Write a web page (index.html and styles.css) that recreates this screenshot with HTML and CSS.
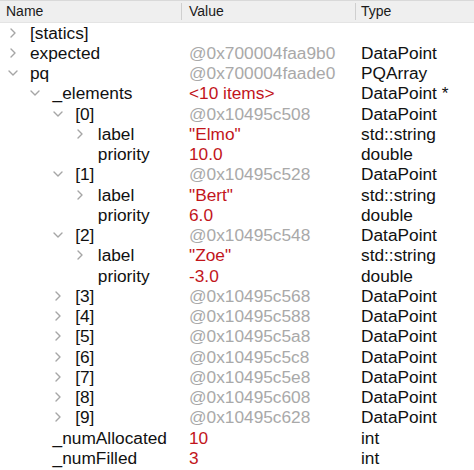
FILE: index.html
```html
<!DOCTYPE html>
<html lang="en">
<head>
  <meta charset="UTF-8">
  <title>Variables</title>
  <link rel="stylesheet" href="styles.css">
</head>
<body>
  <div class="header">
    <div class="hcell">Name</div>
    <div class="hcell sep">Value</div>
    <div class="hcell sep">Type</div>
  </div>

  <div class="rows">
    <div class="row">
      <div class="name lvl0"><span class="twisty right"></span>[statics]</div>
      <div class="value"></div>
      <div class="type"></div>
    </div>
    <div class="row">
      <div class="name lvl0"><span class="twisty right"></span>expected</div>
      <div class="value addr">@0x700004faa9b0</div>
      <div class="type">DataPoint</div>
    </div>
    <div class="row">
      <div class="name lvl0"><span class="twisty down"></span>pq</div>
      <div class="value addr">@0x700004faade0</div>
      <div class="type">PQArray</div>
    </div>
    <div class="row">
      <div class="name lvl1"><span class="twisty down"></span>_elements</div>
      <div class="value lit">&lt;10 items&gt;</div>
      <div class="type">DataPoint *</div>
    </div>

    <!-- element 0 -->
    <div class="row">
      <div class="name lvl2"><span class="twisty down"></span>[0]</div>
      <div class="value addr">@0x10495c508</div>
      <div class="type">DataPoint</div>
    </div>
    <div class="row">
      <div class="name lvl3"><span class="twisty right"></span>label</div>
      <div class="value lit">"Elmo"</div>
      <div class="type">std::string</div>
    </div>
    <div class="row">
      <div class="name lvl3"><span class="twisty"></span>priority</div>
      <div class="value lit">10.0</div>
      <div class="type">double</div>
    </div>

    <!-- element 1 -->
    <div class="row">
      <div class="name lvl2"><span class="twisty down"></span>[1]</div>
      <div class="value addr">@0x10495c528</div>
      <div class="type">DataPoint</div>
    </div>
    <div class="row">
      <div class="name lvl3"><span class="twisty right"></span>label</div>
      <div class="value lit">"Bert"</div>
      <div class="type">std::string</div>
    </div>
    <div class="row">
      <div class="name lvl3"><span class="twisty"></span>priority</div>
      <div class="value lit">6.0</div>
      <div class="type">double</div>
    </div>

    <!-- element 2 -->
    <div class="row">
      <div class="name lvl2"><span class="twisty down"></span>[2]</div>
      <div class="value addr">@0x10495c548</div>
      <div class="type">DataPoint</div>
    </div>
    <div class="row">
      <div class="name lvl3"><span class="twisty right"></span>label</div>
      <div class="value lit">"Zoe"</div>
      <div class="type">std::string</div>
    </div>
    <div class="row">
      <div class="name lvl3"><span class="twisty"></span>priority</div>
      <div class="value lit">-3.0</div>
      <div class="type">double</div>
    </div>

    <!-- collapsed elements -->
    <div class="row">
      <div class="name lvl2"><span class="twisty right"></span>[3]</div>
      <div class="value addr">@0x10495c568</div>
      <div class="type">DataPoint</div>
    </div>
    <div class="row">
      <div class="name lvl2"><span class="twisty right"></span>[4]</div>
      <div class="value addr">@0x10495c588</div>
      <div class="type">DataPoint</div>
    </div>
    <div class="row">
      <div class="name lvl2"><span class="twisty right"></span>[5]</div>
      <div class="value addr">@0x10495c5a8</div>
      <div class="type">DataPoint</div>
    </div>
    <div class="row">
      <div class="name lvl2"><span class="twisty right"></span>[6]</div>
      <div class="value addr">@0x10495c5c8</div>
      <div class="type">DataPoint</div>
    </div>
    <div class="row">
      <div class="name lvl2"><span class="twisty right"></span>[7]</div>
      <div class="value addr">@0x10495c5e8</div>
      <div class="type">DataPoint</div>
    </div>
    <div class="row">
      <div class="name lvl2"><span class="twisty right"></span>[8]</div>
      <div class="value addr">@0x10495c608</div>
      <div class="type">DataPoint</div>
    </div>
    <div class="row">
      <div class="name lvl2"><span class="twisty right"></span>[9]</div>
      <div class="value addr">@0x10495c628</div>
      <div class="type">DataPoint</div>
    </div>

    <div class="row">
      <div class="name lvl1"><span class="twisty"></span>_numAllocated</div>
      <div class="value lit">10</div>
      <div class="type">int</div>
    </div>
    <div class="row">
      <div class="name lvl1"><span class="twisty"></span>_numFilled</div>
      <div class="value lit">3</div>
      <div class="type">int</div>
    </div>
  </div>
</body>
</html>
```

FILE: styles.css
```css
* {
  margin: 0;
  padding: 0;
  box-sizing: border-box;
}

body {
  width: 474px;
  height: 470px;
  overflow: hidden;
  background: #ffffff;
  color: #111111;
  font-family: "Liberation Sans", Arial, sans-serif;
}

.header {
  display: grid;
  grid-template-columns: 181px 174px 1fr;
  align-items: center;
  height: 22.5px;
  background: #efefef;
  border-top: 1px solid #d9d9d9;
  border-bottom: 1px solid #e4e4e4;
}

.hcell {
  height: 17px;
  line-height: 17px;
  font-size: 14px;
  color: #1a1a1a;
  padding-left: 6px;
}

.hcell.sep {
  border-left: 1px solid #cfcfcf;
  padding-left: 7px;
}

.hcell.sep:last-child {
  padding-left: 5px;
}

.row {
  display: grid;
  grid-template-columns: 181px 174px 1fr;
  height: 20.25px;
  line-height: 20.25px;
  font-size: 17.3px;
  white-space: nowrap;
}

.name {
  display: flex;
  align-items: center;
}

.lvl0 { padding-left: 4px; }
.lvl1 { padding-left: 26.6px; }
.lvl2 { padding-left: 49.2px; }
.lvl3 { padding-left: 71.8px; }

.twisty {
  width: 17px;
  height: 20px;
  margin-right: 9px;
  flex-shrink: 0;
  background-repeat: no-repeat;
  background-position: center;
}

.twisty.right {
  background-image: url("data:image/svg+xml,%3Csvg xmlns='http://www.w3.org/2000/svg' width='6' height='10' viewBox='0 0 6 10'%3E%3Cpath d='M1 1l4 4-4 4' fill='none' stroke='%23a6a6a6' stroke-width='1.4' stroke-linecap='round' stroke-linejoin='round'/%3E%3C/svg%3E");
}

.twisty.down {
  background-image: url("data:image/svg+xml,%3Csvg xmlns='http://www.w3.org/2000/svg' width='10' height='6' viewBox='0 0 10 6'%3E%3Cpath d='M1 1l4 4 4-4' fill='none' stroke='%23a6a6a6' stroke-width='1.4' stroke-linecap='round' stroke-linejoin='round'/%3E%3C/svg%3E");
}

.value {
  padding-left: 8px;
}

.type {
  padding-left: 6px;
}

.addr {
  color: #a9a9a9;
}

.lit {
  color: #c2151b;
}
```
